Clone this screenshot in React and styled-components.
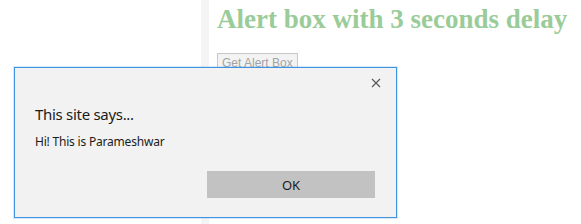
import React from 'react';
import styled, { createGlobalStyle } from 'styled-components';

const GlobalStyle = createGlobalStyle`
  html, body {
    margin: 0;
    padding: 0;
    background: #ffffff;
  }
`;

const Page = styled.div`
  position: relative;
  display: flex;
  width: 581px;
  height: 224px;
  overflow: hidden;
`;

const Sidebar = styled.div`
  width: 201px;
  flex-shrink: 0;
`;

const Divider = styled.div`
  width: 8px;
  flex-shrink: 0;
  background: #f4f4f4;
`;

const Content = styled.main`
  display: flex;
  flex-direction: column;
  align-items: flex-start;
  padding-left: 8px;
`;

const Heading = styled.h1`
  margin: 4px 0 0;
  font-family: "Liberation Serif", "Times New Roman", serif;
  font-size: 27px;
  line-height: 30px;
  font-weight: bold;
  color: #99cc99;
  white-space: nowrap;
`;

const PageButton = styled.button`
  margin-top: 19px;
  height: 20px;
  padding: 0 4px;
  border: 1px solid #c9c9c9;
  background: #f3f3f3;
  color: #a3a3a3;
  font-family: "Liberation Sans", Arial, sans-serif;
  font-size: 12px;
`;

const Dialog = styled.div`
  position: absolute;
  left: 14px;
  top: 67px;
  width: 383px;
  height: 151px;
  box-sizing: border-box;
  border: 1px solid #3f93e0;
  box-shadow: 0 0 0 1px rgba(63, 147, 224, 0.2);
  background: #f2f2f2;
  display: flex;
  flex-direction: column;
  padding: 0 21px 19px 20px;
  font-family: "Noto Sans", "Open Sans", sans-serif;
`;

const DialogTop = styled.div`
  display: flex;
  justify-content: flex-end;
  height: 22px;
  padding-top: 8px;
  margin-right: -8px;
`;

const CloseButton = styled.button`
  width: 14px;
  height: 14px;
  padding: 0;
  border: none;
  background: none;
  display: flex;
  align-items: center;
  justify-content: center;
`;

const Title = styled.div`
  margin-top: 6px;
  font-size: 15px;
  line-height: 20px;
  color: #1b1b1b;
  letter-spacing: -0.3px;
`;

const Message = styled.div`
  margin-top: 10px;
  font-size: 12px;
  line-height: 16px;
  color: #1b1b1b;
  letter-spacing: -0.2px;
`;

const Actions = styled.div`
  margin-top: auto;
  display: flex;
  justify-content: flex-end;
`;

const OkButton = styled.button`
  width: 168px;
  height: 27px;
  border: none;
  background: #c2c2c2;
  color: #1b1b1b;
  font-family: "Noto Sans", "Open Sans", sans-serif;
  font-size: 13px;
  padding: 0;
`;

export default function App() {
  return (
    <>
      <GlobalStyle />
      <Page>
        <Sidebar />
        <Divider />
        <Content>
          <Heading>Alert box with 3 seconds delay</Heading>
          <PageButton>Get Alert Box</PageButton>
        </Content>
        <Dialog>
          <DialogTop>
            <CloseButton aria-label="Close">
              <svg width="10" height="10" viewBox="0 0 10 10">
                <path d="M1 1 L9 9 M9 1 L1 9" stroke="#555" strokeWidth="1.1" fill="none" />
              </svg>
            </CloseButton>
          </DialogTop>
          <Title>This site says...</Title>
          <Message>Hi! This is Parameshwar</Message>
          <Actions>
            <OkButton>OK</OkButton>
          </Actions>
        </Dialog>
      </Page>
    </>
  );
}
